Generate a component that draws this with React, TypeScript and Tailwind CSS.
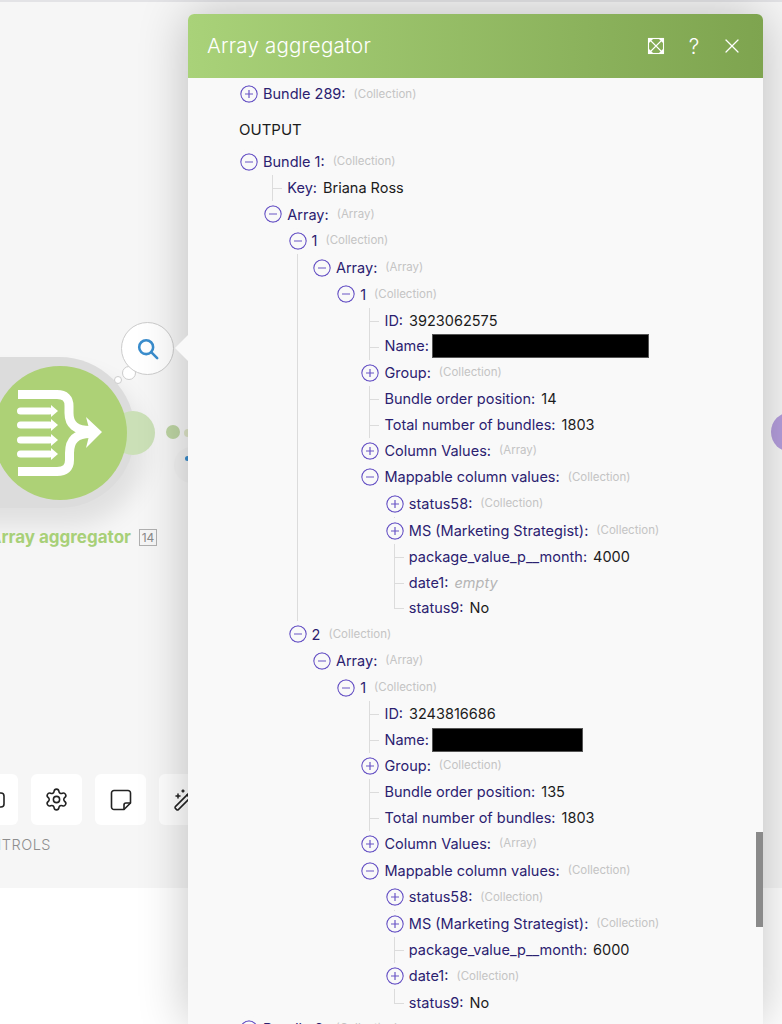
import React from 'react';
import { Settings, WandSparkles, X } from 'lucide-react';

interface TreeItem {
    label: string;
    type?: string;
    value?: string;
    empty?: boolean;
    redactWidth?: string;
    state?: 'open' | 'closed';
    children?: TreeItem[];
}

const bundleItems = (id: string, redact: string, position: string, pkg: string, dateClosed: boolean): TreeItem[] => [
    { label: 'ID', value: id },
    { label: 'Name', redactWidth: redact },
    { label: 'Group', type: 'Collection', state: 'closed' },
    { label: 'Bundle order position', value: position },
    { label: 'Total number of bundles', value: '1803' },
    { label: 'Column Values', type: 'Array', state: 'closed' },
    {
        label: 'Mappable column values',
        type: 'Collection',
        state: 'open',
        children: [
            { label: 'status58', type: 'Collection', state: 'closed' },
            { label: 'MS (Marketing Strategist)', type: 'Collection', state: 'closed' },
            { label: 'package_value_p__month', value: pkg },
            dateClosed
                ? { label: 'date1', type: 'Collection', state: 'closed' }
                : { label: 'date1', value: 'empty', empty: true },
            { label: 'status9', value: 'No' },
        ],
    },
];

const numbered = (n: string, children: TreeItem[]): TreeItem => ({
    label: n,
    type: 'Collection',
    state: 'open',
    children: [
        {
            label: 'Array',
            type: 'Array',
            state: 'open',
            children: [{ label: '1', type: 'Collection', state: 'open', children }],
        },
    ],
});

const output: TreeItem[] = [
    {
        label: 'Bundle 1',
        type: 'Collection',
        state: 'open',
        children: [
            { label: 'Key', value: 'Briana Ross' },
            {
                label: 'Array',
                type: 'Array',
                state: 'open',
                children: [
                    numbered('1', bundleItems('3923062575', 'w-[217px]', '14', '4000', false)),
                    numbered('2', bundleItems('3243816686', 'w-[151px]', '135', '6000', true)),
                ],
            },
        ],
    },
    { label: 'Bundle 2', type: 'Collection', state: 'closed' },
];

const ToggleIcon = ({ open }: { open: boolean }) => (
    <svg viewBox="0 0 18 18" className="relative z-10 h-[18px] w-[18px] shrink-0 rounded-full bg-[#f9f9f9] ring-4 ring-[#f9f9f9]">
        <circle cx="9" cy="9" r="8.2" fill="none" stroke="#6a56c6" strokeWidth="1.2" />
        <path d={open ? 'M5 9h8' : 'M5 9h8M9 5v8'} stroke="#6a56c6" strokeWidth="1.2" />
    </svg>
);

const Row = ({ item }: { item: TreeItem }) => {
    const isNumber = /^\d+$/.test(item.label);
    return (
        <div className={`flex items-center ${item.state ? 'h-[26.7px]' : 'h-[25.7px]'}`}>
            <div className="w-[23px] shrink-0">{item.state && <ToggleIcon open={item.state === 'open'} />}</div>
            <span className="whitespace-nowrap text-[14.5px] text-[#2b2170]">
                {item.label}
                {!isNumber && ':'}
            </span>
            {item.type && <span className="ml-[8px] whitespace-nowrap text-[11.5px] text-[#c4c4c4]">({item.type})</span>}
            {item.value && (
                <span className={`ml-[6px] text-[14.5px] ${item.empty ? 'italic text-[#b5b5b5]' : 'text-[#1c1c1c]'}`}>
                    {item.value}
                </span>
            )}
            {item.redactWidth && (
                <span className={`ml-[3px] h-[24px] border border-[#555] bg-black ${item.redactWidth}`} />
            )}
        </div>
    );
};

const Tree = ({ items, root }: { items: TreeItem[]; root?: boolean }) => (
    <div className={root ? '' : 'pl-[24.3px]'}>
        {items.map((item, i) => {
            const last = i === items.length - 1;
            return (
                <div key={`${item.label}-${i}`} className="relative">
                    {!root && !last && <div className="absolute bottom-0 left-[8px] top-0 w-px bg-[#dcdcdc]" />}
                    {!root && last && !item.state && <div className="absolute left-[8px] top-0 h-[13px] w-px bg-[#dcdcdc]" />}
                    {!root && !item.state && <div className="absolute left-[8px] top-[13px] h-px w-[10px] bg-[#dcdcdc]" />}
                    <Row item={item} />
                    {item.children && <Tree items={item.children} />}
                </div>
            );
        })}
    </div>
);

const AggregatorGlyph = () => (
    <svg viewBox="0 357 135 160" className="h-[160px] w-[135px]">
        <g fill="none" stroke="#fff" strokeWidth="9">
            <path d="M18 394.5H57Q69 394.5 69 406V413Q69 430.5 90 430.5" />
            <path d="M18 471.5H57Q69.5 471.5 69.5 460V453Q69.5 433.5 90 433.5" />
        </g>
        <path d="M102 432L86 417 90 432 86 448Z" fill="#fff" />
        {[411, 425, 440, 454].map((y) => (
            <g key={y} fill="#fff">
                <rect x="17" y={y - 3.5} width="36" height="7" rx="3.5" />
                <path d={`M51 ${y - 6}L58 ${y}L51 ${y + 6}Z`} />
            </g>
        ))}
    </svg>
);

const ToolButton = ({ children }: { children: React.ReactNode }) => (
    <div className="flex h-[51px] w-[51px] shrink-0 items-center justify-center rounded-[6px] bg-white">{children}</div>
);

export default function App() {
    return (
        <div className="relative h-[1024px] w-[782px] overflow-hidden bg-white font-['Inter',sans-serif]">
            <div className="h-[888px] border-t-2 border-[#e3e3e6] bg-[#f6f6f6]" />

            {/* scenario canvas */}
            <div className="absolute left-[-40px] top-[357px] h-[151px] w-[175px] rounded-r-[76px] bg-[#dcdcdc] shadow-[10px_18px_24px_rgba(0,0,0,0.09)]" />
            <div className="absolute left-[111px] top-[411px] h-[44px] w-[44px] rounded-full bg-[#cbe0b7]" />
            <div className="absolute left-[166px] top-[425px] h-[14px] w-[14px] rounded-full bg-[#bed5a4]" />
            <div className="absolute left-[184px] top-[429px] h-[8px] w-[8px] rounded-full bg-[#dfe6c8]" />
            <div className="absolute left-[174px] top-[447px] h-[36px] w-[36px] rounded-full bg-[#f2f2f2]" />
            <div className="absolute left-[185px] top-[456px] h-[5px] w-[5px] rounded-full bg-[#3a8dcd]" />
            <div className="absolute left-[-7px] top-[366px] h-[134px] w-[134px] rounded-full bg-[#add176]" />
            <div className="absolute left-0 top-[357px]">
                <AggregatorGlyph />
            </div>
            <div className="absolute left-[114px] top-[376px] h-[8px] w-[8px] rounded-full border border-[#ccc] bg-white" />
            <div className="absolute left-[122px] top-[366px] h-[14px] w-[14px] rounded-full border border-[#ccc] bg-white" />
            <div className="absolute left-[121px] top-[322px] flex h-[53px] w-[53px] items-center justify-center rounded-full border border-[#ccc] bg-white">
                <svg viewBox="0 0 24 24" className="h-[22px] w-[22px]" fill="none" stroke="#3a8dcd" strokeWidth="2.8">
                    <circle cx="10" cy="10" r="7.6" />
                    <path d="M15.5 15.5L22 22" strokeLinecap="round" />
                </svg>
            </div>
            <div className="absolute right-[625px] top-[525px] flex items-center gap-[8px]">
                <span className="whitespace-nowrap text-[17px] font-bold text-[#a8d078]">Array aggregator</span>
                <span className="flex h-[17px] w-[18px] items-center justify-center border border-[#b0b0b0] text-[12px] text-[#8a8a8a]">14</span>
            </div>

            {/* toolbar */}
            <div className="absolute left-[-33px] top-[774px] flex gap-[13px]">
                <ToolButton>
                    <svg viewBox="0 0 24 24" className="h-[24px] w-[24px]" fill="none" stroke="#222" strokeWidth="1.6">
                        <rect x="8" y="5" width="15" height="14" rx="3" />
                    </svg>
                </ToolButton>
                <ToolButton>
                    <Settings size={25} strokeWidth={1.5} color="#222" />
                </ToolButton>
                <ToolButton>
                    <svg viewBox="0 0 24 24" className="h-[24px] w-[24px]" fill="none" stroke="#222" strokeWidth="1.6" strokeLinejoin="round">
                        <path d="M5 2.5H19a2.5 2.5 0 0 1 2.5 2.5V15L15 21.5H5A2.5 2.5 0 0 1 2.5 19V5A2.5 2.5 0 0 1 5 2.5Z" />
                        <path d="M21.5 15H17a2 2 0 0 0-2 2V21.5" />
                    </svg>
                </ToolButton>
                <ToolButton>
                    <WandSparkles size={24} strokeWidth={1.5} color="#222" />
                </ToolButton>
            </div>
            <div className="absolute right-[731px] top-[834px] whitespace-nowrap text-[14.5px] font-light tracking-[0.5px] text-[#8e8e8e]">CONTROLS</div>

            {/* purple node behind the panel, on the right */}
            <div className="absolute left-[771px] top-[412px] h-[40px] w-[40px] rounded-full bg-[#b49edc]" />
            <div className="absolute left-[175px] top-[334px] z-10 h-0 w-0 border-y-[14px] border-r-[14px] border-y-transparent border-r-[#f9f9f9]" />

            {/* modal */}
            <div className="absolute left-[188px] top-[14px] h-[1010px] w-[575px] overflow-hidden rounded-t-[6px] bg-[#f9f9f9] shadow-[0_0_50px_rgba(0,0,0,0.24)]">
                <div className="flex h-[64px] items-center justify-between bg-gradient-to-r from-[#a9d279] to-[#7ea44f] pl-[19px] pr-[21px]">
                    <span className="text-[20.5px] font-light tracking-[0.2px] text-white">Array aggregator</span>
                    <div className="flex items-center gap-[18px] text-white">
                        <div className="flex w-[20px] justify-center">
                            <svg viewBox="0 0 18 18" className="h-[18px] w-[18px]" fill="none" stroke="#fff" strokeWidth="1.1">
                                <rect x="1.5" y="1.5" width="15" height="15" />
                                <path d="M2 2L16 16M16 2L2 16" />
                                <g fill="#fff" stroke="none">
                                    <path d="M1 1H7L1 7Z" />
                                    <path d="M17 1H11L17 7Z" />
                                    <path d="M17 17H11L17 11Z" />
                                    <path d="M1 17H7L1 11Z" />
                                </g>
                            </svg>
                        </div>
                        <span className="w-[20px] text-center text-[21px] font-light leading-none">?</span>
                        <div className="flex w-[20px] justify-center">
                            <X size={24} strokeWidth={1.2} className="shrink-0" />
                        </div>
                    </div>
                </div>
                <div className="relative pl-[52px] pt-[3px]">
                    <Tree root items={[{ label: 'Bundle 289', type: 'Collection', state: 'closed' }]} />
                    <div className="-ml-px pb-[9px] pt-[12px] text-[15px] leading-[20px] text-[#1c1c1c]">OUTPUT</div>
                    <Tree root items={output} />
                    <div className="absolute right-0 top-[754px] h-[95px] w-[7px] bg-[#8a8a8a]" />
                </div>
            </div>
        </div>
    );
}
